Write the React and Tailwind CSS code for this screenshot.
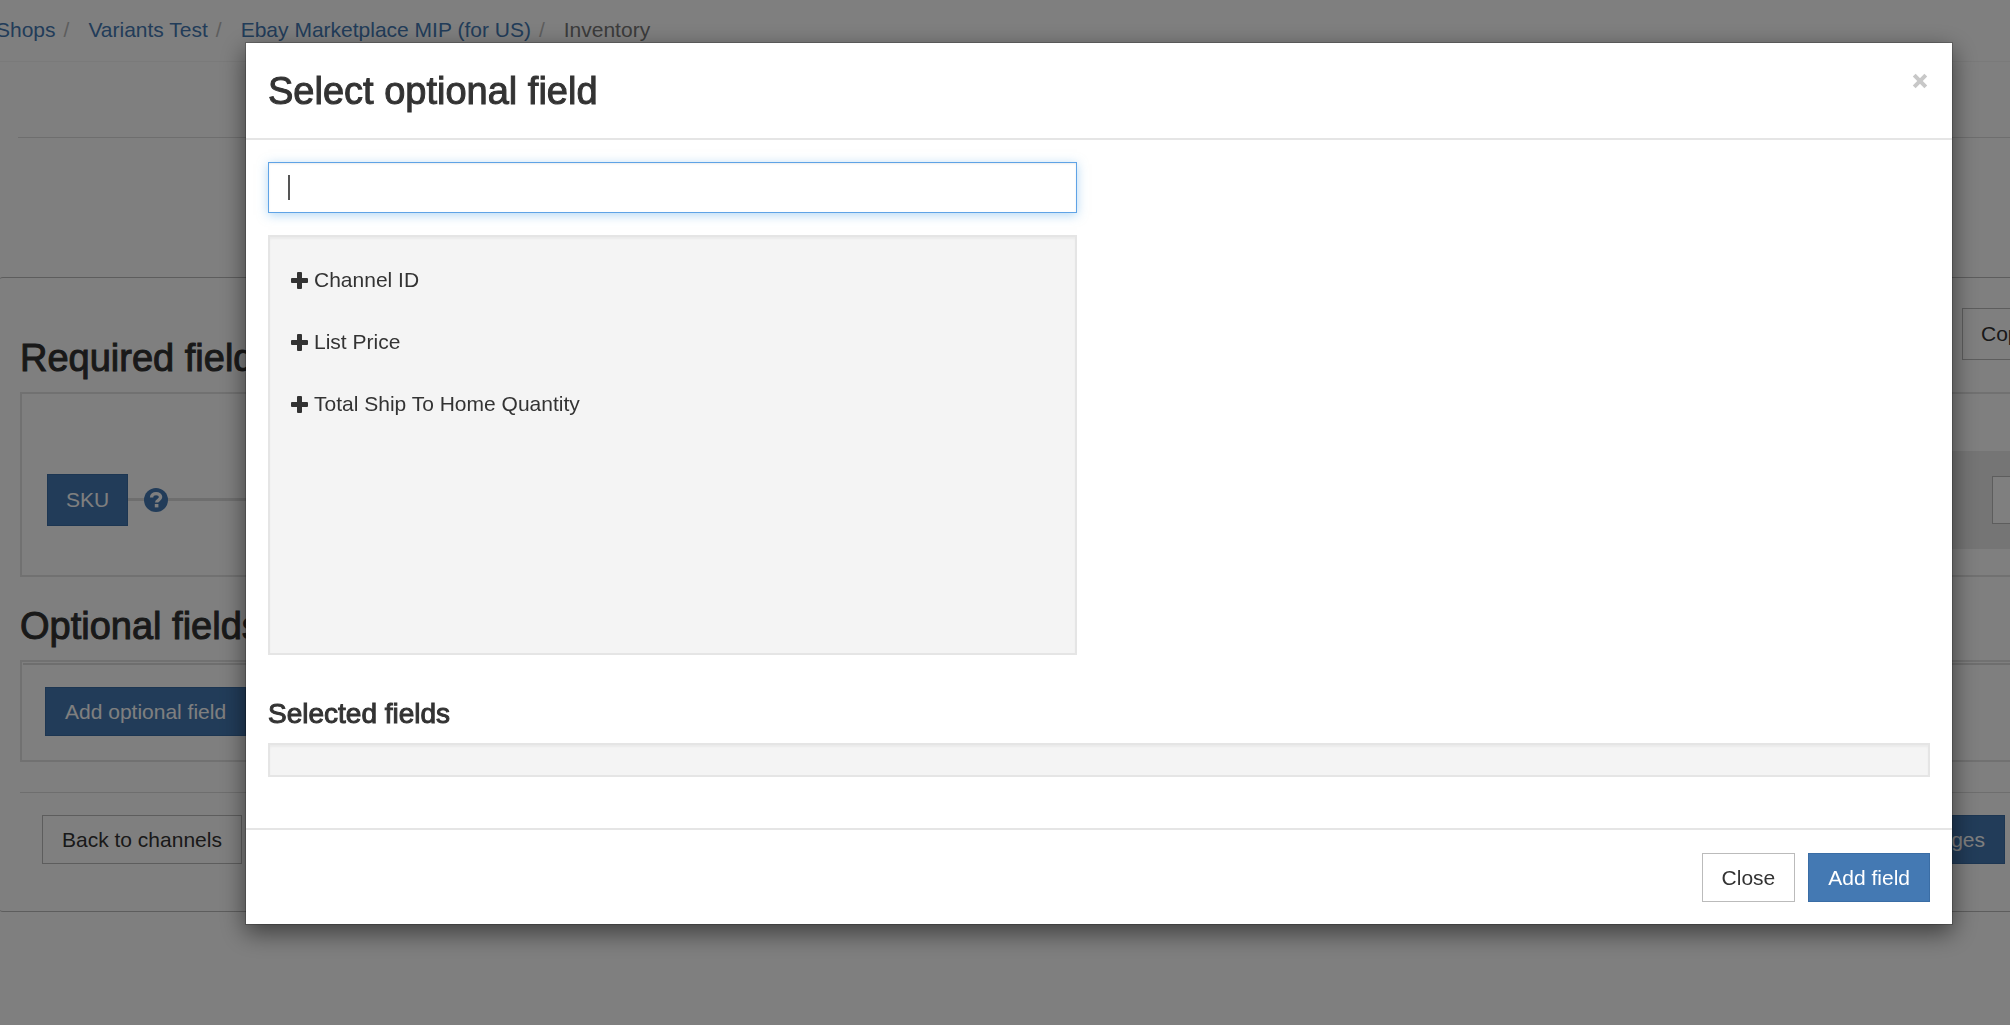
const fields = ['Channel ID', 'List Price', 'Total Ship To Home Quantity']

const crumbs = ['Shops', 'Variants Test', 'Ebay Marketplace MIP (for US)']

const btn = 'border text-[21px] whitespace-nowrap'
const btnDefault = `${btn} bg-white border-[#bbb] text-[#333]`
const btnPrimary = `${btn} bg-[#4479b3] border-[#3a6da5] text-white`
const btnMd = 'px-[19px] py-3 leading-[23px]'
const btnLg = 'px-[18px] py-[13px] leading-6'

const heading = 'font-medium [-webkit-text-stroke:1px_#333]'
const well = 'border-2 border-[#e5e5e5] bg-[#f4f4f4] shadow-[inset_0_2px_2px_rgba(0,0,0,0.04)]'

function PlusIcon() {
  return (
    <svg viewBox="0 0 17 17" className="w-[17px] h-[17px] shrink-0" fill="#333" aria-hidden="true">
      <rect x="6" y="0" width="5" height="17" rx="1" />
      <rect x="0" y="6" width="17" height="5" rx="1" />
    </svg>
  )
}

function CloseIcon() {
  return (
    <svg viewBox="0 0 16 16" className="w-4 h-4" aria-hidden="true">
      <path d="M2.2 2.2l11.6 11.6M13.8 2.2L2.2 13.8" stroke="#c8c8c8" strokeWidth="4" />
    </svg>
  )
}

function HelpIcon() {
  return (
    <svg viewBox="0 0 24 24" className="w-6 h-6 shrink-0" aria-hidden="true">
      <circle cx="12" cy="12" r="12" fill="#4479b3" />
      <path d="M7.6 9.4C7.6 6.7 9.6 5.6 12.1 5.6s4.5 1.3 4.5 3.5c0 3.1-3.9 2.8-3.9 5.3" fill="none" stroke="#fff" strokeWidth="3.4" />
      <rect x="10.8" y="16" width="3.6" height="3.4" fill="#fff" />
    </svg>
  )
}

function Breadcrumb() {
  return (
    <nav className="-ml-1 h-[62px] border-b border-[#f5f5f5] pt-[15px]">
      <ol className="flex text-[21px] leading-[30px] whitespace-nowrap">
        {crumbs.map((crumb) => (
          <li key={crumb} className="flex">
            <a href="#" className="text-[#4479b3]">{crumb}</a>
            <span className="pl-2 pr-[19px] text-[#bbb]">/</span>
          </li>
        ))}
        <li className="text-[#777]">Inventory</li>
      </ol>
    </nav>
  )
}

function Page() {
  return (
    <div className="h-screen overflow-hidden bg-white">
      <Breadcrumb />
      <div className="ml-[18px] h-[76px] border-b border-[#ddd]" />
      <div className="h-[139px]" />

      <main className="-ml-px -mr-20 h-[635px] rounded-l-sm border-y border-[#bbb] pl-[21px]">
        {/* Required fields */}
        <div className="flex h-[114px] items-start justify-between pt-[30px]">
          <h3 className={`pt-[29px] text-[38px] leading-[42px] ${heading}`}>Required fields</h3>
          <button type="button" className={`${btnDefault} ${btnLg} w-[128px] text-left`}>Copy</button>
        </div>
        <section className="flex h-[185px] items-center justify-between border-2 border-[#e2e2e2] pl-[25px] pt-[32px] pb-[2px]">
          <button type="button" className={`${btnPrimary} ${btnLg}`}>SKU</button>
          <div className="h-[3px] w-4 bg-[#ddd]" />
          <HelpIcon />
          <div className="h-[3px] flex-1 bg-[#ddd]" />
          <div className="flex h-[98px] w-[200px] items-center justify-end bg-[#ebebeb]">
            <input aria-label="SKU value" className="h-12 w-[96px] border border-[#bbb] bg-white" />
          </div>
        </section>

        {/* Optional fields */}
        <h3 className={`mt-[28px] text-[38px] leading-[42px] ${heading}`}>Optional fields</h3>
        <section className="mt-[13px] h-[102px] border-2 border-[#e2e2e2] px-px pt-px">
          <div className="border-t-2 border-[#ddd] pt-[22px] pl-[22px]">
            <button type="button" className={`${btnPrimary} ${btnMd}`}>Add optional field</button>
          </div>
        </section>

        <hr className="mt-[30px] border-[#ddd]" />
        <div className="mt-[22px] flex justify-between pl-[22px] pr-[85px]">
          <button type="button" className={`${btnDefault} ${btnMd}`}>Back to channels</button>
          <button type="button" className={`${btnPrimary} ${btnMd}`}>Save changes</button>
        </div>
      </main>
    </div>
  )
}

function Modal() {
  return (
    <div
      role="dialog"
      aria-labelledby="modal-title"
      className="mt-[42px] ml-[245px] mr-[57px] border border-black/20 bg-white bg-clip-padding shadow-[0_8px_23px_rgba(0,0,0,0.5)]"
    >
      <header className="flex h-[97px] items-start justify-between border-b-2 border-[#e5e5e5] px-[22px]">
        <h2 id="modal-title" className={`pt-[27px] text-[38px] leading-[42px] ${heading}`}>Select optional field</h2>
        <button type="button" aria-label="Close dialog" className="px-0.5 pt-[30px]">
          <CloseIcon />
        </button>
      </header>

      <div className="h-[688px] px-[22px] pt-[22px]">
        <div className="w-[809px]">
          <div className="relative">
            <input
              aria-label="Search fields"
              className="block h-[51px] w-full border border-[#5fa3e6] px-5 text-[21px] caret-transparent outline-none shadow-[inset_0_1px_2px_rgba(0,0,0,0.08),0_2px_10px_rgba(102,175,233,0.5)]"
            />
            <span className="absolute left-5 top-[13px] h-[25px] w-0.5 bg-[#555]" />
          </div>
          <ul className={`mt-[22px] h-[420px] px-[21px] pt-3 ${well}`}>
            {fields.map((field) => (
              <li key={field}>
                <button type="button" className="flex h-[62px] items-center gap-[6px] text-[21px]">
                  <PlusIcon />
                  {field}
                </button>
              </li>
            ))}
          </ul>
        </div>
        <h4 className={`mt-[43px] text-[28px] leading-8 ${heading}`}>Selected fields</h4>
        <div className={`mt-[13px] h-[34px] ${well}`} />
      </div>

      <footer className="flex justify-end gap-[13px] border-t-2 border-[#e5e5e5] px-[22px] pt-[23px] pb-[22px]">
        <button type="button" className={`${btnDefault} ${btnMd}`}>Close</button>
        <button type="button" className={`${btnPrimary} ${btnMd}`}>Add field</button>
      </footer>
    </div>
  )
}

export default function App() {
  return (
    <div className="font-['Liberation_Sans',Arial,sans-serif] text-[#333]">
      <Page />
      <div className="fixed inset-0 overflow-hidden bg-black/50">
        <Modal />
      </div>
    </div>
  )
}
